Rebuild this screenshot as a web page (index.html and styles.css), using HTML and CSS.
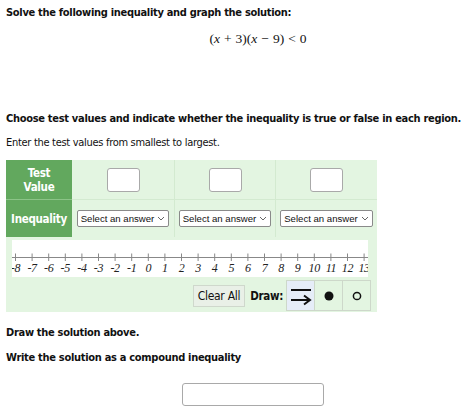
FILE: index.html
```html
<!DOCTYPE html>
<html>
<head>
<meta charset="utf-8">
<link rel="stylesheet" href="styles.css">
</head>
<body>
<div class="page">
  <p class="bold title">Solve the following inequality and graph the solution:</p>
  <div class="math"><span>(</span><i>x</i><span class="op">+</span><span>3)(</span><i>x</i><span class="op">−</span><span>9)</span><span class="op">&lt;</span><span>0</span></div>
  <p class="bold choose">Choose test values and indicate whether the inequality is true or false in each region.</p>
  <p class="enter">Enter the test values from smallest to largest.</p>
  <div class="table">
    <div class="head h1">Test<br>Value</div>
    <div class="cell c1"><span class="box"></span></div>
    <div class="cell c1"><span class="box"></span></div>
    <div class="cell c1 last"><span class="box"></span></div>
    <div class="head h2">Inequality</div>
    <div class="cell c2"><span class="sel">Select an answer <svg width="8" height="5" viewBox="0 0 8 5"><path d="M1 1 L4 4 L7 1" fill="none" stroke="#666" stroke-width="1"/></svg></span></div>
    <div class="cell c2"><span class="sel">Select an answer <svg width="8" height="5" viewBox="0 0 8 5"><path d="M1 1 L4 4 L7 1" fill="none" stroke="#666" stroke-width="1"/></svg></span></div>
    <div class="cell c2 last"><span class="sel">Select an answer <svg width="8" height="5" viewBox="0 0 8 5"><path d="M1 1 L4 4 L7 1" fill="none" stroke="#666" stroke-width="1"/></svg></span></div>
    <div class="graph">
      <div class="nl">
        <svg class="axis" width="356" height="37" viewBox="0 0 356 37">
          <line x1="0" y1="17.5" x2="356" y2="17.5" stroke="#888" stroke-width="1"/>
          <g stroke="#888" stroke-width="1">
            <line x1="3.5" y1="13.5" x2="3.5" y2="21"/><line x1="20.1" y1="13.5" x2="20.1" y2="21"/><line x1="36.7" y1="13.5" x2="36.7" y2="21"/><line x1="53.3" y1="13.5" x2="53.3" y2="21"/><line x1="69.9" y1="13.5" x2="69.9" y2="21"/><line x1="86.5" y1="13.5" x2="86.5" y2="21"/><line x1="103.1" y1="13.5" x2="103.1" y2="21"/><line x1="119.7" y1="13.5" x2="119.7" y2="21"/><line x1="136.3" y1="13.5" x2="136.3" y2="21"/><line x1="152.9" y1="13.5" x2="152.9" y2="21"/><line x1="169.5" y1="13.5" x2="169.5" y2="21"/><line x1="186.1" y1="13.5" x2="186.1" y2="21"/><line x1="202.7" y1="13.5" x2="202.7" y2="21"/><line x1="219.3" y1="13.5" x2="219.3" y2="21"/><line x1="235.9" y1="13.5" x2="235.9" y2="21"/><line x1="252.5" y1="13.5" x2="252.5" y2="21"/><line x1="269.1" y1="13.5" x2="269.1" y2="21"/><line x1="285.7" y1="13.5" x2="285.7" y2="21"/><line x1="302.3" y1="13.5" x2="302.3" y2="21"/><line x1="318.9" y1="13.5" x2="318.9" y2="21"/><line x1="335.5" y1="13.5" x2="335.5" y2="21"/><line x1="352.1" y1="13.5" x2="352.1" y2="21"/>
          </g>
          <g class="lbl" font-family="Liberation Serif, serif" font-style="italic" font-size="12" fill="#222" text-anchor="middle">
            <text x="3.5" y="32">-8</text><text x="20.1" y="32">-7</text><text x="36.7" y="32">-6</text><text x="53.3" y="32">-5</text><text x="69.9" y="32">-4</text><text x="86.5" y="32">-3</text><text x="103.1" y="32">-2</text><text x="119.7" y="32">-1</text><text x="136.3" y="32">0</text><text x="152.9" y="32">1</text><text x="169.5" y="32">2</text><text x="186.1" y="32">3</text><text x="202.7" y="32">4</text><text x="219.3" y="32">5</text><text x="235.9" y="32">6</text><text x="252.5" y="32">7</text><text x="269.1" y="32">8</text><text x="285.7" y="32">9</text><text x="302.3" y="32">10</text><text x="318.9" y="32">11</text><text x="335.5" y="32">12</text><text x="352.1" y="32">13</text>
          </g>
        </svg>
      </div>
      <div class="tools">
        <span class="btn clear">Clear All</span>
        <span class="draw">Draw:</span>
        <span class="tool sel-tool"><svg width="22" height="22" viewBox="0 0 22 22"><line x1="1" y1="5" x2="21" y2="5" stroke="#111" stroke-width="2"/><line x1="1" y1="15" x2="19" y2="15" stroke="#111" stroke-width="2"/><path d="M14 10.5 L20 15 L14 19.5" fill="none" stroke="#111" stroke-width="2"/></svg></span>
        <span class="tool"><svg width="12" height="12" viewBox="0 0 12 12"><circle cx="6" cy="6" r="4.5" fill="#111"/></svg></span>
        <span class="tool"><svg width="12" height="12" viewBox="0 0 12 12"><circle cx="6" cy="6" r="3.6" fill="none" stroke="#111" stroke-width="1.5"/></svg></span>
      </div>
    </div>
  </div>
  <p class="bold drawsol">Draw the solution above.</p>
  <p class="bold write">Write the solution as a compound inequality</p>
  <div class="answer"><span class="ansbox"></span></div>
</div>
</body>
</html>
```
FILE: styles.css
```css
html, body { margin: 0; padding: 0; overflow: hidden; background: #fff; }
body { font-family: "DejaVu Sans Condensed", "DejaVu Sans", sans-serif; font-size: 11px; letter-spacing: -0.3px; color: #111; }
.page { width: 498px; padding: 0 0 0 6px; }
p { margin: 0; white-space: nowrap; }
.bold { font-weight: bold; }
.title { padding-top: 5px; line-height: 15px; }
.math { text-align: center; font-family: "Liberation Serif", serif; font-size: 13.5px; letter-spacing: 0; margin-top: 11px; line-height: 16px; padding-left: 6px; }
.math i { font-style: italic; }
.math .op { margin: 0 4px; }
.choose { margin-top: 64px; line-height: 15px; }
.enter { margin-top: 9px; line-height: 15px; }
.table { margin-top: 10px; width: 371px; display: grid; grid-template-columns: 66px 103px 101px 101px; grid-template-rows: 40px 37px 75px; background: #e3f5e1; }
.head { background: #62a85e; color: #fff; font-weight: bold; display: flex; align-items: center; justify-content: center; text-align: center; line-height: 14px; font-size: 11.5px; }
.h1 { border-bottom: 1px solid #8cc488; }
.cell { display: flex; align-items: center; justify-content: center; border-right: 1px solid #d3ead0; }
.cell.last { border-right: none; }
.c1 { border-bottom: 1px solid #d3ead0; }
.box { width: 31px; height: 22px; background: #fff; border: 1px solid #a9a9a9; border-radius: 3px; }
.sel { display: inline-flex; align-items: center; gap: 3px; height: 15px; padding: 0 3px; background: #fff; border: 1px solid #8a8a8a; border-radius: 2px; font-family: "Liberation Sans", Arial, sans-serif; font-size: 9.6px; letter-spacing: 0; color: #111; white-space: nowrap; }
.graph { grid-column: 1 / 5; padding: 3px 6px 0 6px; }
.nl { background: #fff; height: 37px; width: 356px; overflow: hidden; }
.axis { display: block; }
.tools { display: flex; align-items: center; justify-content: flex-end; margin-top: 3px; }
.btn.clear { background: #e9f0e7; border: 1px solid #cfd8cc; padding: 3px 4px; font-size: 12px; line-height: 14px; color: #111; }
.draw { margin-left: 5px; margin-right: 3px; font-size: 11.5px; font-weight: 600; }
.tool { width: 27px; height: 29px; border: 1px solid #cdd8ca; display: flex; align-items: center; justify-content: center; background: #e3f5e1; margin-left: -1px; }
.tool.sel-tool { background: #e6edf8; margin-left: 0; }
.drawsol { margin-top: 13px; line-height: 15px; }
.write { margin-top: 10px; line-height: 15px; }
.answer { width: 498px; display: flex; justify-content: center; margin-top: 18px; }
.ansbox { width: 140px; height: 21px; border: 1px solid #a9a9a9; border-radius: 3px; background: #fff; margin-left: -4px; }
```
